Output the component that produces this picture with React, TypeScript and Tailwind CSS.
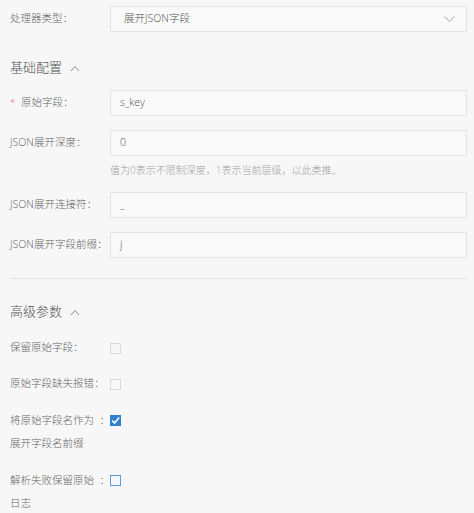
import React from "react";

const font = { fontFamily: '"Open Sans","Noto Sans CJK SC",sans-serif' };

function ChevronUp() {
  return (
    <svg width="10" height="7" viewBox="0 0 10 7" className="ml-[8px]">
      <path d="M1 6 L5 1.5 L9 6" fill="none" stroke="#888" strokeWidth="1" />
    </svg>
  );
}

function Input({ value }: { value: string }) {
  return (
    <div className="flex-1 h-[26px] border border-[#e4e4e4] bg-[#f9f9f9] flex items-center pl-[9px] text-[10.5px] text-[#555]">
      {value}
    </div>
  );
}

function Row({ label, required, children }: { label: string; required?: boolean; children: React.ReactNode }) {
  return (
    <div className="flex items-center">
      <div className="w-[100px] text-[10.5px] text-[#666] flex items-center">
        {required && <span className="text-[#e66] mr-[6px] text-[9px]">*</span>}
        <span>{label}</span>
      </div>
      {children}
    </div>
  );
}

function Checkbox({ state }: { state: "off" | "on" | "focus" }) {
  if (state === "on")
    return (
      <div className="w-[11px] h-[11px] bg-[#3080d0] flex items-center justify-center">
        <svg width="9" height="9" viewBox="0 0 9 9">
          <path d="M1.2 4.6 L3.6 7 L8.2 1.6" fill="none" stroke="#fff" strokeWidth="1.6" />
        </svg>
      </div>
    );
  if (state === "focus")
    return <div className="w-[11px] h-[11px] border border-[#5a9bd8] bg-[#f3f8fd]" />;
  return <div className="w-[11px] h-[11px] border border-[#d9d9d9] bg-[#f7f7f7]" />;
}

export default function App() {
  return (
    <div className="w-[474px] h-[513px] bg-[#f7f7f7] overflow-hidden font-light" style={font}>
      <div className="pl-[10px] pr-[7px] pt-[6px] flex flex-col">
        <Row label="处理器类型：">
          <div className="flex-1 h-[26px] border border-[#e4e4e4] bg-[#f9f9f9] flex items-center pl-[13px] pr-[11px] text-[10.5px] text-[#555]">
            <span className="flex-1">展开JSON字段</span>
            <svg width="11" height="6" viewBox="0 0 11 6">
              <path d="M0.5 0.5 L5.5 5.3 L10.5 0.5" fill="none" stroke="#aaa" strokeWidth="1" />
            </svg>
          </div>
        </Row>

        <div className="mt-[26px] h-[20px] flex items-center text-[13px] text-[#555]">
          基础配置
          <ChevronUp />
        </div>

        <div className="mt-[12px]">
          <Row label="原始字段：" required>
            <Input value="s_key" />
          </Row>
        </div>

        <div className="mt-[14px]">
          <Row label="JSON展开深度：">
            <Input value="0" />
          </Row>
        </div>
        <div className="mt-[7px] h-[14px] pl-[100px] text-[10px] leading-[14px] text-[#a0a0a0]">
          值为0表示不限制深度，1表示当前层级，以此类推。
        </div>

        <div className="mt-[15px]">
          <Row label="JSON展开连接符：">
            <Input value="_" />
          </Row>
        </div>

        <div className="mt-[14px]">
          <Row label="JSON展开字段前缀：">
            <Input value="j" />
          </Row>
        </div>

        <div className="mt-[20px] border-t border-[#e2e2e2]" />

        <div className="mt-[23px] h-[20px] flex items-center text-[13px] text-[#555]">
          高级参数
          <ChevronUp />
        </div>

        <div className="mt-[16px] h-[20px] flex items-center">
          <div className="w-[100px] text-[10.5px] text-[#666]">保留原始字段：</div>
          <Checkbox state="off" />
        </div>

        <div className="mt-[16px] h-[20px] flex items-center">
          <div className="w-[100px] text-[10.5px] text-[#666]">原始字段缺失报错：</div>
          <Checkbox state="off" />
        </div>

        <div className="mt-[15px] flex items-start text-[10.5px] text-[#666] leading-[23px]">
          <div className="w-[100px] flex">
            <div className="w-[90px]">将原始字段名作为 展开字段名前缀</div>
            <span>：</span>
          </div>
          <div className="h-[23px] flex items-center">
            <Checkbox state="on" />
          </div>
        </div>

        <div className="mt-[14px] flex items-start text-[10.5px] text-[#666] leading-[23px]">
          <div className="w-[100px] flex">
            <div className="w-[90px]">解析失败保留原始 日志</div>
            <span>：</span>
          </div>
          <div className="h-[23px] flex items-center">
            <Checkbox state="focus" />
          </div>
        </div>
      </div>
    </div>
  );
}
